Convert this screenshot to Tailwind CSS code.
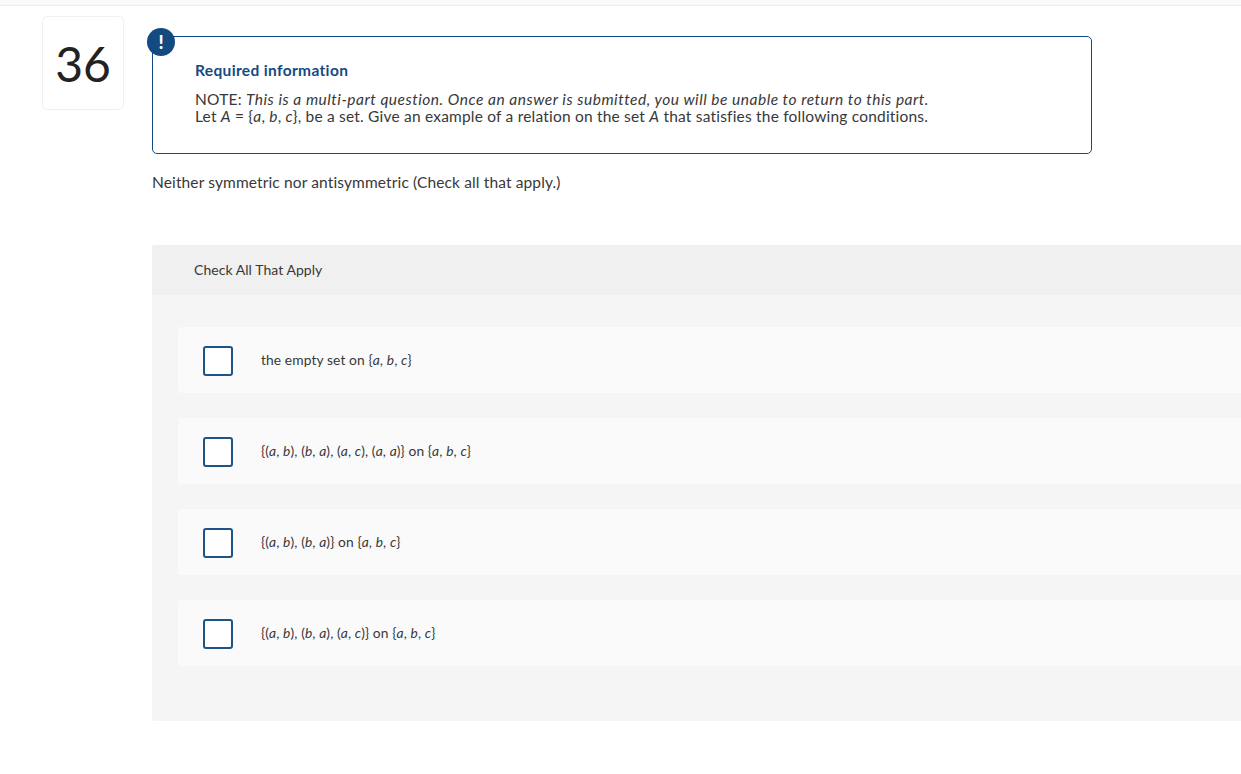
<!DOCTYPE html>
<html lang="en">
<head>
    <meta charset="UTF-8">
    <title>Question 36</title>
    <script src="https://cdn.jsdelivr.net/npm/@tailwindcss/browser@4"></script>
</head>
<body class="bg-white overflow-hidden font-['Lato',sans-serif] text-[#383838] w-[1241px] h-[774px]">

    <!-- Top strip -->
    <div class="h-[6px] bg-[#fafafa] border-b border-[#ececec]"></div>

    <div class="flex items-start pl-[42px] pt-[10px]">

        <!-- Question number -->
        <div class="w-[82px] h-[94px] shrink-0 flex items-center justify-center border border-[#f0f0f0] rounded-[5px] text-[48px] leading-none text-[#222] pt-[2px]">36</div>

        <div class="ml-[28px] w-[1089px] shrink-0">

            <!-- Required information -->
            <div class="relative mt-[20px] w-[940px] h-[118px] border border-[#144a82] rounded-[5px] pl-[42px] pt-[24px]">
                <div class="absolute left-[-6px] top-[-9px] w-[28px] h-[28px] rounded-full bg-[#144a82] flex items-center justify-center text-white text-[18px] font-black leading-none">!</div>
                <h2 class="text-[15.5px] leading-[18px] font-bold text-[#144a82] tracking-[0.35px]">Required information</h2>
                <p class="mt-[12px] text-[15.5px] leading-[17px] tracking-[0.2px]">NOTE: <i class="tracking-[0.51px]">This is a multi-part question. Once an answer is submitted, you will be unable to return to this part.</i><br>Let <i>A</i> = {<i>a</i>, <i>b</i>, <i>c</i>}, be a set. Give an example of a relation on the set <i>A</i> that satisfies the following conditions.</p>
            </div>

            <p class="mt-[19px] h-[19px] text-[15.5px] leading-[18px] tracking-[0.13px]">Neither symmetric nor antisymmetric (Check all that apply.)</p>

            <!-- Answer panel -->
            <div class="mt-[53px] h-[476px] bg-[#f5f5f5] rounded-l-[3px]">
                <div class="h-[50px] bg-[#f0f0f0] pl-[42px] pb-[2px] flex items-center text-[14px] tracking-[0.05px] rounded-tl-[3px]">Check All That Apply</div>
                <div class="pl-[26px] pt-[32px] flex flex-col gap-[25px]">
                    <label class="h-[66px] bg-[#fafafa] rounded-l-[3px] pl-[25px] flex items-center">
                        <span class="w-[30px] h-[30px] mt-[1px] shrink-0 bg-white border-2 border-[#1c5488] rounded-[3px]"></span>
                        <span class="ml-[28px] text-[13.8px] tracking-[0.1px]">the empty set on {<i>a</i>, <i>b</i>, <i>c</i>}</span>
                    </label>
                    <label class="h-[66px] bg-[#fafafa] rounded-l-[3px] pl-[25px] flex items-center">
                        <span class="w-[30px] h-[30px] mt-[1px] shrink-0 bg-white border-2 border-[#1c5488] rounded-[3px]"></span>
                        <span class="ml-[28px] text-[13.8px] tracking-[0.1px]">{(<i>a</i>, <i>b</i>), (<i>b</i>, <i>a</i>), (<i>a</i>, <i>c</i>), (<i>a</i>, <i>a</i>)} on {<i>a</i>, <i>b</i>, <i>c</i>}</span>
                    </label>
                    <label class="h-[66px] bg-[#fafafa] rounded-l-[3px] pl-[25px] flex items-center">
                        <span class="w-[30px] h-[30px] mt-[1px] shrink-0 bg-white border-2 border-[#1c5488] rounded-[3px]"></span>
                        <span class="ml-[28px] text-[13.8px] tracking-[0.1px]">{(<i>a</i>, <i>b</i>), (<i>b</i>, <i>a</i>)} on {<i>a</i>, <i>b</i>, <i>c</i>}</span>
                    </label>
                    <label class="h-[66px] bg-[#fafafa] rounded-l-[3px] pl-[25px] flex items-center">
                        <span class="w-[30px] h-[30px] mt-[1px] shrink-0 bg-white border-2 border-[#1c5488] rounded-[3px]"></span>
                        <span class="ml-[28px] text-[13.8px] tracking-[0.1px]">{(<i>a</i>, <i>b</i>), (<i>b</i>, <i>a</i>), (<i>a</i>, <i>c</i>)} on {<i>a</i>, <i>b</i>, <i>c</i>}</span>
                    </label>
                </div>
            </div>
        </div>
    </div>
</body>
</html>
